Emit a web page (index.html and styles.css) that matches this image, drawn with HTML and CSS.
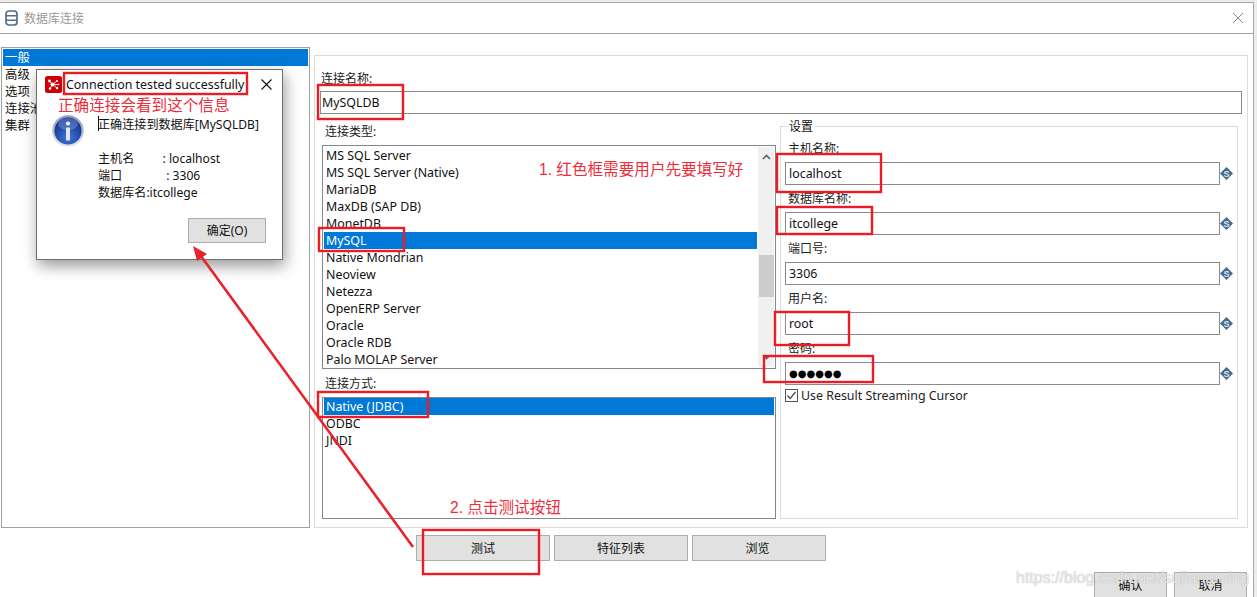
FILE: index.html
```html
<!DOCTYPE html>
<html lang="zh">
<head>
<meta charset="utf-8">
<title>数据库连接</title>
<link rel="stylesheet" href="styles.css">
</head>
<body>
<div class="window">
  <header class="titlebar">
    <svg class="db-icon" width="13" height="16" viewBox="0 0 13 16"><rect x="1" y="1" width="11" height="14" rx="3" fill="#fff" stroke="#4f6f8c" stroke-width="1.7"/><path d="M1 5.7H12M1 10.3H12" stroke="#4f6f8c" stroke-width="1.5"/></svg>
    <span class="title-text">数据库连接</span>
    <svg class="win-close" width="12" height="12" viewBox="0 0 12 12"><path d="M1 1L11 11M11 1L1 11" stroke="#8a8a8a" stroke-width="1" fill="none"/></svg>
  </header>
  <main class="main">
    <ul class="nav">
      <li class="sel">一般</li>
      <li>高级</li>
      <li>选项</li>
      <li>连接池</li>
      <li>集群</li>
    </ul>
    <section class="panel">
      <label class="lbl lbl-name">连接名称:</label>
      <div class="input input-name">MySQLDB</div>
      <div class="cols">
        <div class="col-left">
          <label class="lbl lbl-left">连接类型:</label>
          <div class="list list-types">
            <ul class="rows">
              <li>MS SQL Server</li>
              <li>MS SQL Server (Native)</li>
              <li>MariaDB</li>
              <li>MaxDB (SAP DB)</li>
              <li>MonetDB</li>
              <li class="sel">MySQL</li>
              <li>Native Mondrian</li>
              <li>Neoview</li>
              <li>Netezza</li>
              <li>OpenERP Server</li>
              <li>Oracle</li>
              <li>Oracle RDB</li>
              <li>Palo MOLAP Server</li>
            </ul>
            <div class="scrollbar">
              <svg class="chev" width="9" height="6" viewBox="0 0 9 6"><path d="M1 5L4.5 1.5L8 5" stroke="#606060" stroke-width="1.6" fill="none"/></svg>
              <div class="thumb"></div>
              <svg class="chev chev-down" width="9" height="6" viewBox="0 0 9 6"><path d="M1 1L4.5 4.5L8 1" stroke="#606060" stroke-width="1.6" fill="none"/></svg>
            </div>
          </div>
          <label class="lbl lbl-left lbl-method">连接方式:</label>
          <div class="list list-method">
            <ul class="rows">
              <li class="sel">Native (JDBC)</li>
              <li>ODBC</li>
              <li>JNDI</li>
            </ul>
          </div>
        </div>
        <fieldset class="group">
          <legend class="legend">设置</legend>
          <label class="lbl lbl-field">主机名称:</label>
          <div class="field"><div class="input">localhost</div><svg class="s-icon" width="13" height="13" viewBox="0 0 13 13"><polygon points="6.5,0 13,6.5 6.5,13 0,6.5" fill="#45698c"/><text x="6.5" y="9.5" text-anchor="middle" class="s-text">S</text></svg></div>
          <label class="lbl lbl-field">数据库名称:</label>
          <div class="field"><div class="input">itcollege</div><svg class="s-icon" width="13" height="13" viewBox="0 0 13 13"><polygon points="6.5,0 13,6.5 6.5,13 0,6.5" fill="#45698c"/><text x="6.5" y="9.5" text-anchor="middle" class="s-text">S</text></svg></div>
          <label class="lbl lbl-field">端口号:</label>
          <div class="field"><div class="input">3306</div><svg class="s-icon" width="13" height="13" viewBox="0 0 13 13"><polygon points="6.5,0 13,6.5 6.5,13 0,6.5" fill="#45698c"/><text x="6.5" y="9.5" text-anchor="middle" class="s-text">S</text></svg></div>
          <label class="lbl lbl-field">用户名:</label>
          <div class="field"><div class="input">root</div><svg class="s-icon" width="13" height="13" viewBox="0 0 13 13"><polygon points="6.5,0 13,6.5 6.5,13 0,6.5" fill="#45698c"/><text x="6.5" y="9.5" text-anchor="middle" class="s-text">S</text></svg></div>
          <label class="lbl lbl-field">密码:</label>
          <div class="field"><div class="input input-pass">●●●●●●</div><svg class="s-icon" width="13" height="13" viewBox="0 0 13 13"><polygon points="6.5,0 13,6.5 6.5,13 0,6.5" fill="#45698c"/><text x="6.5" y="9.5" text-anchor="middle" class="s-text">S</text></svg></div>
          <div class="check-row">
            <svg class="check" width="13" height="13" viewBox="0 0 13 13"><rect x="0.5" y="0.5" width="12" height="12" fill="#fff" stroke="#555"/><path d="M2.5 6.5L5.2 9.5L10.5 3" stroke="#444" stroke-width="1.2" fill="none"/></svg>
            <span>Use Result Streaming Cursor</span>
          </div>
        </fieldset>
      </div>
    </section>
  </main>
  <div class="actions">
    <button class="btn btn-wide">测试</button>
    <button class="btn btn-wide">特征列表</button>
    <button class="btn btn-wide btn-browse">浏览</button>
  </div>
  <div class="footer">
    <button class="btn btn-foot">确认</button>
    <button class="btn btn-foot">取消</button>
  </div>
</div>

<div class="dialog">
  <div class="dlg-head">
    <svg class="dlg-logo" width="17" height="17" viewBox="0 0 17 17"><rect width="17" height="17" rx="2.5" fill="#cc0008"/><path d="M7.5 8.5L4.5 5M7.5 8.5L12 5M7.5 8.5L5 12.5M7.5 8.5L12 12M7.5 8.5L13.5 8.5" stroke="#fff" stroke-width="0.9"/><circle cx="7.5" cy="8.5" r="2" fill="#fff"/><circle cx="4.5" cy="5" r="1.4" fill="#fff"/><circle cx="12" cy="5" r="1" fill="#fff"/><circle cx="5" cy="12.5" r="1.2" fill="#fff"/><circle cx="12" cy="12" r="1.2" fill="#fff"/><circle cx="13.5" cy="8.5" r="0.8" fill="#fff"/></svg>
    <span class="dlg-title">Connection tested successfully</span>
    <svg class="dlg-close" width="11" height="11" viewBox="0 0 11 11"><path d="M0.5 0.5L10.5 10.5M10.5 0.5L0.5 10.5" stroke="#111" stroke-width="1.1" fill="none"/></svg>
  </div>
  <div class="dlg-body">
    <svg class="info" width="32" height="32" viewBox="0 0 32 32">
      <defs>
        <radialGradient id="blue" cx="50%" cy="75%" r="70%"><stop offset="0" stop-color="#3f78d8"/><stop offset="1" stop-color="#11308f"/></radialGradient>
        <linearGradient id="ring" x1="0" y1="0" x2="0" y2="1"><stop offset="0" stop-color="#8a9ab0"/><stop offset="1" stop-color="#e4e8ee"/></linearGradient>
      </defs>
      <circle cx="16" cy="16" r="15.8" fill="url(#ring)"/>
      <circle cx="16" cy="16" r="13.6" fill="url(#blue)"/>
      <ellipse cx="16" cy="9" rx="10" ry="6" fill="#9db8ea" opacity=".35"/>
      <circle cx="16" cy="8.5" r="2.1" fill="#f2f4f8"/>
      <rect x="14" y="12.5" width="4" height="13" rx="1" fill="#e4e6ea"/>
    </svg>
    <div class="dlg-text"><span class="caret"></span>正确连接到数据库[MySQLDB]

主机名         : localhost
端口              : 3306
数据库名:itcollege</div>
  </div>
  <button class="btn dlg-ok">确定(O)</button>
</div>

<svg class="marks" width="1257" height="597" viewBox="0 0 1257 597">
  <g class="box">
    <rect x="64" y="73" width="183" height="21"/>
    <rect x="318" y="85" width="85" height="34"/>
    <rect x="319" y="228" width="85" height="23"/>
    <rect x="777" y="154" width="104" height="38"/>
    <rect x="777" y="207" width="95" height="27"/>
    <rect x="775" y="312" width="74" height="33"/>
    <rect x="764" y="356" width="109" height="26"/>
    <rect x="318" y="392" width="110" height="25"/>
    <rect x="423" y="530" width="116" height="44"/>
  </g>
  <path class="arrow" d="M413 547L198 252"/>
  <polygon class="arrow-head" points="193,246 207,254 197,261"/>
</svg>
<span class="note note-a">正确连接会看到这个信息</span>
<span class="note note-b">1. 红色框需要用户先要填写好</span>
<span class="note note-c">2. 点击测试按钮</span>
<span class="watermark">https://blog.csdn.net/sujiangming</span>
</body>
</html>
```
FILE: styles.css
```css
* { box-sizing: border-box; }
html, body { margin: 0; padding: 0; }
body {
  position: relative;
  width: 1257px;
  height: 597px;
  overflow: hidden;
  background: #ececec;
  font: 12.4px/17px "Noto Sans", "Noto Sans CJK SC", sans-serif;
  color: #111;
}
ul { list-style: none; margin: 0; padding: 0; }

.window {
  width: 1254px;
  height: 597px;
  margin-top: 2px;
  background: #fff;
  border-top: 1px solid #a8a8a8;
  border-right: 1px solid #a8a8a8;
  overflow: hidden;
}
.titlebar {
  display: flex;
  align-items: center;
  height: 31px;
  padding: 0 9px 0 5px;
  border-bottom: 1px solid #a3a3a3;
}
.title-text { margin-left: 6px; font-size: 12px; color: #999; flex: 1; }
.win-close { flex: none; }

.main {
  display: flex;
  height: 494px;
  padding: 13px 0 0 1px;
}
.nav {
  width: 309px;
  height: 481px;
  padding: 1px;
  border: 1px solid #a0a0a0;
  flex: none;
}
.nav li { height: 17px; padding-left: 2px; }
.sel { background: #0078d7; color: #fff; }

.panel {
  width: 934px;
  margin: 8px 0 0 4px;
  padding: 14px 5px 0 5px;
  border: 1px solid #dcdcdc;
}
.lbl { display: block; height: 17px; font-size: 12px; color: #222; }
.lbl-name { margin-left: 1px; margin-bottom: 4px; }
.input {
  height: 23px;
  padding-left: 3px;
  border: 1px solid #8a8a8a;
  line-height: 21px;
  background: #fff;
}
.input-name { padding-left: 1px; }
.input-pass { font: 10px/21px "DejaVu Sans", sans-serif; padding-left: 3px; color: #000; }

.cols {
  display: flex;
  gap: 4px;
  margin-top: 9px;
  margin-left: 2px;
  height: 396px;
}
.col-left { width: 454px; flex: none; }
.lbl-left { margin-left: 3px; margin-bottom: 5px; }
.lbl-method { margin-top: 6px; }
.list {
  display: flex;
  padding: 1px;
  border: 1px solid #828790;
  overflow: hidden;
}
.list-types { height: 224px; }
.list-method { height: 122px; padding-top: 0; }
.rows { flex: 1; }
.rows li { height: 17px; padding-left: 2px; white-space: nowrap; }
.scrollbar {
  display: flex;
  flex-direction: column;
  align-items: center;
  width: 16px;
  margin-left: 1px;
  background: #f0f0f0;
  flex: none;
}
.chev { margin-top: 7px; flex: none; }
.thumb { width: 15px; height: 42px; margin-top: 95px; background: #cdcdcd; flex: none; }
.chev-down { margin-top: auto; margin-bottom: 7px; }

.group {
  width: 458px;
  min-width: 0;
  margin: -5px 0 0;
  padding: 0 4px;
  border: 1px solid #dcdcdc;
  height: 401px;
}
.legend { margin-left: 2px; padding: 0 2px; font-size: 12px; line-height: 17px; }
.lbl-field { margin: 5px 0 5px 3px; }
.field { display: flex; align-items: center; }
.field .input { width: 435px; flex: none; }
.s-icon { flex: none; }
.s-text { font: bold 9px "Liberation Sans", sans-serif; fill: #dfe7ee; }
.check-row { display: flex; align-items: center; gap: 3px; margin-top: 2px; color: #222; }
.check { flex: none; }

.actions { display: flex; gap: 4px; margin-top: 7px; padding-left: 416px; }
.btn {
  font: 12px/17px "Noto Sans", "Noto Sans CJK SC", sans-serif;
  color: #111;
  background: #e1e1e1;
  border: 1px solid #adadad;
  padding: 0;
}
.btn-wide { width: 134px; height: 26px; }
.btn-browse { padding-right: 3px; }
.footer { display: flex; justify-content: flex-end; gap: 7px; margin-top: 11px; padding-right: 6px; }
.btn-foot { width: 73px; height: 26px; }

.dialog {
  position: absolute;
  left: 36px;
  top: 69px;
  width: 247px;
  height: 191px;
  display: flex;
  flex-direction: column;
  background: #fff;
  border: 1px solid #6f6f6f;
  box-shadow: 2px 6px 14px rgba(0,0,0,.4);
}
.dlg-head { display: flex; align-items: center; height: 29px; padding: 0 10px 0 8px; }
.dlg-logo { flex: none; }
.dlg-title { margin-left: 4px; flex: 1; white-space: nowrap; }
.dlg-close { flex: none; }
.dlg-body { display: flex; padding: 16px 0 0 15px; }
.info { flex: none; }
.dlg-text { position: relative; margin-left: 14px; margin-top: 1px; white-space: pre; font-size: 12.1px; line-height: 17px; }
.caret { position: absolute; left: 0; top: 0; width: 1px; height: 15px; background: #111; }
.dlg-ok { position: absolute; left: 151px; top: 148px; width: 78px; height: 25px; }

.marks { position: absolute; left: 0; top: 0; pointer-events: none; }
.box rect { fill: none; stroke: #ed1c24; stroke-width: 2.4; }
.arrow { fill: none; stroke: #e8232b; stroke-width: 2.6; }
.arrow-head { fill: #e8232b; }
.note {
  position: absolute;
  color: #ed2d3b;
  font-family: "Liberation Sans", "Noto Sans CJK SC", sans-serif;
  white-space: nowrap;
  font-size: 15.6px;
  line-height: 18px;
}
.note-a { left: 58px; top: 97px; }
.note-b { left: 539px; top: 161px; }
.note-c { left: 450px; top: 499px; }
.watermark {
  position: absolute;
  left: 1016px;
  top: 569px;
  font: 16px/18px "Liberation Sans", sans-serif;
  color: rgba(255,255,255,.75);
  text-shadow: 0 0 1px #999;
  white-space: nowrap;
}
```
